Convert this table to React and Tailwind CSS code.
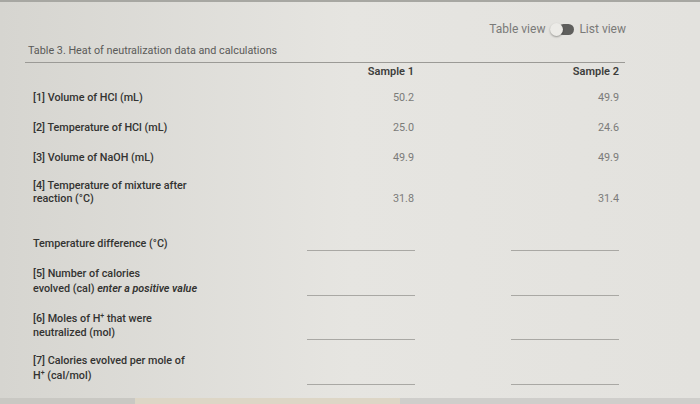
const rows = [
  { label: '[1] Volume of HCl (mL)', s1: '50.2', s2: '49.9' },
  { label: '[2] Temperature of HCl (mL)', s1: '25.0', s2: '24.6' },
  { label: '[3] Volume of NaOH (mL)', s1: '49.9', s2: '49.9' },
]

function Blank() {
  return <div className="ml-auto h-px w-[108px] bg-[#a9a8a4]" />
}

function App() {
  return (
    <div
      className="relative flex h-[404px] w-[700px] flex-col overflow-hidden bg-gradient-to-r from-[#d6d5d0] via-[#e6e5e1] to-[#e3e2de] text-[#333331]"
      style={{ fontFamily: 'Roboto, "Liberation Sans", sans-serif' }}
    >
      <div className="h-[2px] bg-[#a7a7a2]" />

      <div className="flex items-center justify-end gap-[4px] pr-[74px] pt-[18px] text-[12px] text-[#7a7a78]">
        <span>Table view</span>
        <span className="relative mx-[1px] flex h-[13px] w-[24px] items-center">
          <span className="absolute right-0 h-[11px] w-[16px] rounded-full bg-[#5f5f5d]" />
          <span className="absolute left-0 h-[13px] w-[13px] rounded-full bg-[#ecebe7] shadow-[0_1px_2px_rgba(0,0,0,0.35)]" />
        </span>
        <span>List view</span>
      </div>

      <div className="ml-[25px] mt-[5px] w-[600px]">
        <div className="border-b border-[#9b9a96] pb-[3px] pl-[3px] text-[10.8px] text-[#5a5a58]">
          Table 3. Heat of neutralization data and calculations
        </div>

        <div className="grid grid-cols-[280px_110px_210px] pt-[1px] text-[11px] font-semibold text-[#3d3d3b]">
          <div />
          <div className="pr-[1px] text-right">Sample 1</div>
          <div className="pr-[6px] text-right">Sample 2</div>
        </div>

        <div className="mt-[9px] text-[10.8px]">
          {rows.map((row) => (
            <div key={row.label} className="grid h-[30px] grid-cols-[280px_110px_210px] items-start">
              <div className="pl-[8px] font-medium">{row.label}</div>
              <div className="pr-[1px] text-right text-[#7b7b79]">{row.s1}</div>
              <div className="pr-[6px] text-right text-[#7b7b79]">{row.s2}</div>
            </div>
          ))}

          <div className="-mt-[1px] grid grid-cols-[280px_110px_210px] items-end">
            <div className="pl-[8px] font-medium leading-[13px]">
              [4] Temperature of mixture after
              <br />
              reaction (°C)
            </div>
            <div className="pr-[1px] text-right leading-[13px] text-[#7b7b79]">31.8</div>
            <div className="pr-[6px] text-right leading-[13px] text-[#7b7b79]">31.4</div>
          </div>

          <div className="mt-[32px] grid grid-cols-[280px_110px_210px] items-end">
            <div className="pl-[8px] font-medium leading-[14px]">Temperature difference (°C)</div>
            <div><Blank /></div>
            <div className="pr-[6px]"><Blank /></div>
          </div>

          <div className="mt-[15px] grid grid-cols-[280px_110px_210px] items-end">
            <div className="pl-[8px] font-medium leading-[15px]">
              [5] Number of calories
              <br />
              evolved (cal) <span className="font-semibold italic">enter a positive value</span>
            </div>
            <div><Blank /></div>
            <div className="pr-[6px]"><Blank /></div>
          </div>

          <div className="mt-[16px] grid grid-cols-[280px_110px_210px] items-end">
            <div className="pl-[8px] font-medium leading-[14px]">
              [6] Moles of H<sup className="text-[7px] leading-none">+</sup> that were
              <br />
              neutralized (mol)
            </div>
            <div><Blank /></div>
            <div className="pr-[6px]"><Blank /></div>
          </div>

          <div className="mt-[13px] grid grid-cols-[280px_110px_210px] items-end">
            <div className="pb-[2px] pl-[8px] font-medium leading-[15px]">
              [7] Calories evolved per mole of
              <br />
              H<sup className="text-[7px] leading-none">+</sup> (cal/mol)
            </div>
            <div><Blank /></div>
            <div className="pr-[6px]"><Blank /></div>
          </div>
        </div>
      </div>

      <div className="mt-auto flex h-[6px]">
        <div className="w-[135px] bg-[#c9c8c3]" />
        <div className="w-[265px] bg-[#ddd6c6]" />
        <div className="flex-1 bg-[#cfcecb]" />
      </div>
    </div>
  )
}

export default App
